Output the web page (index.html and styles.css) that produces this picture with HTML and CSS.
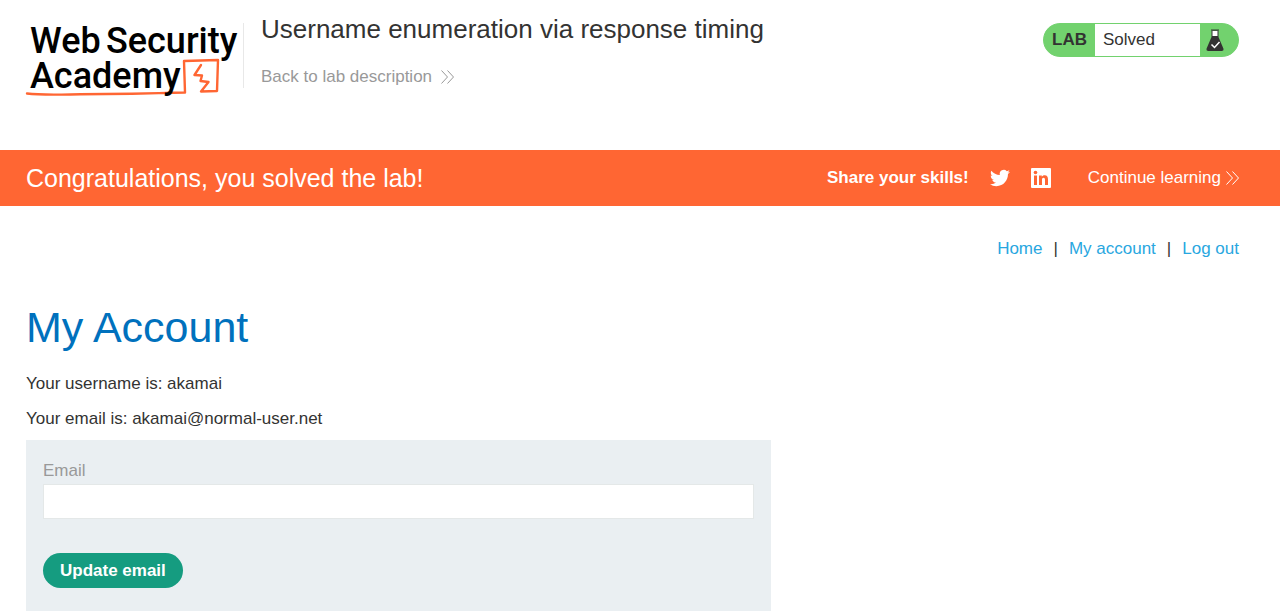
FILE: index.html
```html
<!DOCTYPE html>
<html lang="en">
<head>
  <meta charset="UTF-8">
  <meta name="viewport" content="width=device-width, initial-scale=1.0">
  <title>Username enumeration via response timing</title>
  <link rel="stylesheet" href="styles.css">
</head>
<body>
  <!-- Lab header -->
  <header class="lab-header">
    <a class="logo" href="#" aria-label="Web Security Academy">
      <svg width="217" height="76" viewBox="0 0 217 76">
        <path d="M1 71.500C20 74 40 72 80 72S130 71 159 70.500L158 39 192 38 191 69 175 69.500 182.500 60 174.500 59 176 53.500 168.500 53 175 43" fill="none" stroke="#ff6633" stroke-width="2.400" stroke-linejoin="round" stroke-linecap="round"/>
        <text class="logo-text" x="4" y="31">Web</text>
        <text class="logo-text" x="80" y="31">Security</text>
        <text class="logo-text" x="4" y="66">Academy</text>
      </svg>
    </a>
    <div class="title">
      <h2>Username enumeration via response timing</h2>
      <a class="back-link" href="#">Back to lab description
        <svg width="13" height="14" viewBox="0 0 13 14"><path d="M.500.500L6.500 7l-6 6.500M6.500.500l6 6.500-6 6.500"/></svg>
      </a>
    </div>
    <div class="lab-status">
      <span class="lab-label">LAB</span>
      <p>Solved</p>
      <span class="lab-icon">
        <svg width="18" height="23" viewBox="0 0 18 23">
          <path d="M5.500 1.500v6.500L.600 19.500Q0 22 2.500 22h13Q18 22 17.400 19.500L12.500 8V1.500z" fill="#333332"/>
          <path d="M6.500 2h5v5h-5z" fill="#fff"/>
          <path d="M5 1h8" stroke="#333332" stroke-width="1"/>
          <path d="M5.500 15.500l3 3 5-5.500" fill="none" stroke="#fff" stroke-width="1.500"/>
        </svg>
      </span>
    </div>
  </header>

  <!-- Solved banner -->
  <section class="banner">
    <h4>Congratulations, you solved the lab!</h4>
    <div class="banner-links">
      <span class="share-text">Share your skills!</span>
      <a class="share-icon" href="#" aria-label="Twitter">
        <svg width="20" height="20" viewBox="0 0 24 24"><path fill="#fff" d="M23.950 4.570a10 10 0 0 1-2.820.770 4.960 4.960 0 0 0 2.160-2.720c-.950.550-2 .950-3.120 1.180a4.920 4.920 0 0 0-8.390 4.490C7.690 8.090 4.070 6.130 1.640 3.160a4.820 4.820 0 0 0-.670 2.480c0 1.710.870 3.210 2.190 4.090a4.900 4.900 0 0 1-2.230-.610v.060a4.920 4.920 0 0 0 3.950 4.830 5 5 0 0 1-2.210.080 4.940 4.940 0 0 0 4.600 3.420A9.870 9.870 0 0 1 0 19.540a14 14 0 0 0 7.550 2.210c9.050 0 14-7.500 14-13.980 0-.210 0-.420-.020-.630a9.940 9.940 0 0 0 2.460-2.550z"/></svg>
      </a>
      <a class="share-icon" href="#" aria-label="LinkedIn">
        <svg width="20" height="20" viewBox="0 0 20 20">
          <rect width="20" height="20" rx="1" fill="#fff"/>
          <circle cx="4.500" cy="4.500" r="1.800" fill="#ff6633"/>
          <path fill="#ff6633" d="M3 7.500h3V17H3zM8 7.500h2.800v1.300c.500-.900 1.500-1.500 2.800-1.500 2.700 0 3.400 1.700 3.400 4.200V17h-3v-4.800c0-1.300-.200-2.400-1.500-2.400S11 10.800 11 12.200V17H8z"/>
        </svg>
      </a>
      <a class="continue-link" href="#">Continue learning
        <svg width="13" height="14" viewBox="0 0 13 14"><path d="M.500.500L6.500 7l-6 6.500M6.500.500l6 6.500-6 6.500"/></svg>
      </a>
    </div>
  </section>

  <!-- Account page -->
  <main class="container">
    <nav class="top-links">
      <a href="#">Home</a><span>|</span><a href="#">My account</a><span>|</span><a href="#">Log out</a>
    </nav>
    <h1>My Account</h1>
    <div class="account-content">
      <p>Your username is: akamai</p>
      <p>Your email is: akamai@normal-user.net</p>
      <form class="login-form">
        <label for="email">Email</label>
        <input type="email" id="email" name="email">
        <button type="submit">Update email</button>
      </form>
    </div>
  </main>
</body>
</html>
```
FILE: styles.css
```css
* {
  box-sizing: border-box;
}
body {
  margin: 0;
  background-color: #fff;
  color: #333332;
  font-family: "Liberation Sans", Arial, sans-serif;
  font-size: 17px;
  line-height: 24px;
}
h1, h2, h4, p {
  margin: 0;
  font-weight: normal;
}
a {
  color: #29a7df;
  text-decoration: none;
}
svg {
  display: block;
  overflow: visible;
}

/* Header */
.lab-header {
  display: flex;
  align-items: flex-start;
  padding: 0 41px 52px 26px;
}
.logo {
  padding-top: 22px;
}
.logo-text {
  font-family: Roboto, sans-serif;
  font-size: 36px;
  font-weight: 500;
  fill: #000;
}
.title {
  margin-top: 23px;
  height: 65px;
  padding-left: 17px;
  border-left: 1px solid #e8e8e8;
}
.title h2 {
  margin-top: -8px;
  font-size: 26px;
  line-height: 28px;
}
.back-link {
  display: flex;
  align-items: center;
  gap: 9px;
  margin-top: 22px;
  color: #999;
}
.back-link path, .continue-link path {
  fill: none;
  stroke: currentColor;
  stroke-width: 1;
}
.lab-status {
  display: flex;
  width: 196px;
  height: 34px;
  margin: 23px 0 0 auto;
  border: 1px solid #72d26e;
  border-radius: 17px;
  background: linear-gradient(to right, #72d26e 52px, #fff 52px, #fff 157px, #72d26e 157px) border-box;
  overflow: hidden;
  line-height: 32px;
}
.lab-label {
  width: 51px;
  padding-left: 8px;
  font-weight: bold;
}
.lab-status p {
  flex: 1;
  padding-left: 8px;
}
.lab-icon {
  width: 39px;
  padding: 5px 0 0 7px;
}

/* Banner */
.banner {
  display: flex;
  align-items: center;
  justify-content: space-between;
  padding: 16px 41px 16px 26px;
  background-color: #ff6633;
  color: #fff;
}
.banner h4 {
  font-size: 25px;
}
.banner-links {
  display: flex;
  align-items: center;
}
.share-text {
  font-weight: bold;
}
.share-icon {
  margin-left: 21px;
}
.continue-link {
  display: flex;
  align-items: center;
  gap: 5px;
  margin-left: 37px;
  color: #fff;
}

/* Account */
.container {
  padding: 31px 41px 0 26px;
}
.top-links {
  display: flex;
  justify-content: flex-end;
  gap: 11px;
}
h1 {
  margin-top: 40px;
  color: #0071bd;
  font-size: 43px;
  line-height: 52px;
}
.account-content {
  max-width: 745px;
  margin-top: 19px;
}
.account-content p {
  margin-bottom: 11px;
}
.login-form {
  margin-top: -2px;
  padding: 19px 17px 24px;
  background-color: #eaeff2;
}
.login-form label {
  display: block;
  color: #999;
}
.login-form input {
  display: block;
  width: 100%;
  height: 35px;
  margin-top: 1px;
  padding: 0 8px;
  border: 1px solid #e4e8e8;
  background-color: #fff;
  font: inherit;
}
.login-form button {
  height: 35px;
  margin-top: 34px;
  padding: 0 17px;
  border: none;
  border-radius: 18px;
  background-color: #159c80;
  color: #fff;
  font-family: inherit;
  font-size: 17px;
  font-weight: bold;
  cursor: pointer;
}
```
